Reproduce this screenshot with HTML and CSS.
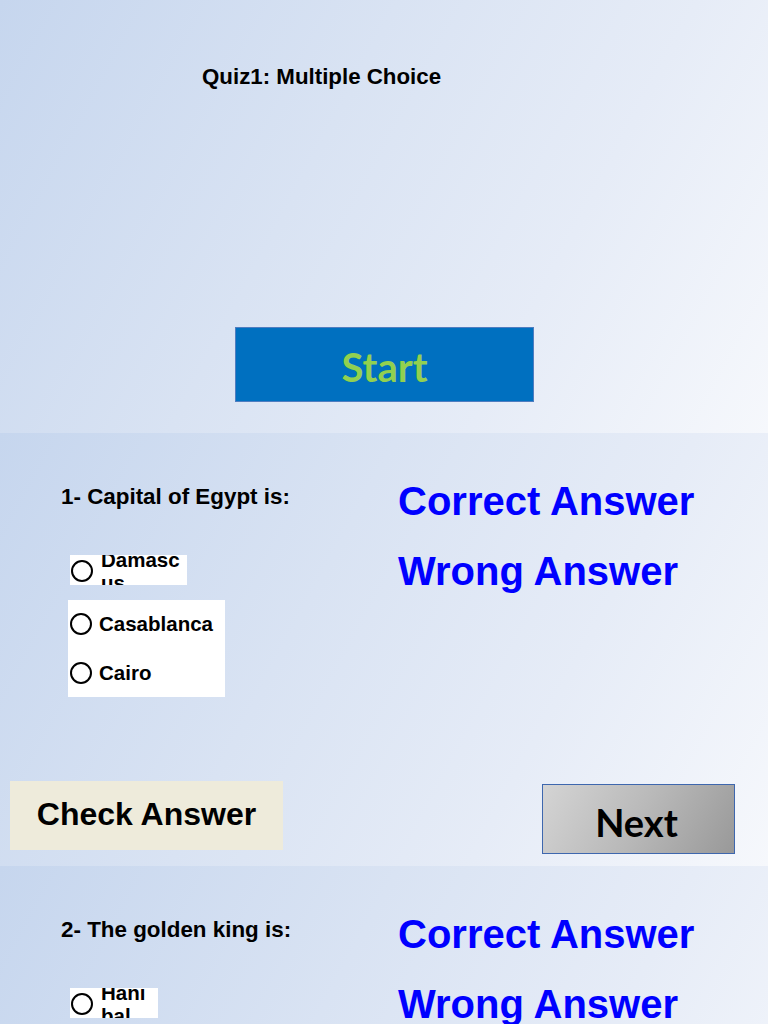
FILE: index.html
```html
<!DOCTYPE html>
<html lang="en">
<head>
<meta charset="utf-8">
<title>Quiz1: Multiple Choice</title>
<link rel="stylesheet" href="styles.css">
</head>
<body>
<section class="slide slide-title">
  <h1 class="quiz-title">Quiz1: Multiple Choice</h1>
  <button class="start-btn" type="button">Start</button>
</section>

<section class="slide slide-question">
  <div class="content">
    <div class="left">
      <p class="question">1- Capital of Egypt is:</p>
      <div class="opt-box opt-single opt-damascus">
        <span class="radio"></span>
        <span class="opt-text wrap">Damascus</span>
      </div>
      <div class="opt-box opt-group">
        <div class="opt-row"><span class="radio"></span><span class="opt-text">Casablanca</span></div>
        <div class="opt-row"><span class="radio"></span><span class="opt-text">Cairo</span></div>
      </div>
    </div>
    <div class="right">
      <p class="feedback">Correct Answer</p>
      <p class="feedback">Wrong Answer</p>
    </div>
  </div>
  <div class="actions">
    <button class="check-btn" type="button">Check Answer</button>
    <button class="next-btn" type="button">Next</button>
  </div>
</section>

<section class="slide slide-question">
  <div class="content">
    <div class="left">
      <p class="question">2- The golden king is:</p>
      <div class="opt-box opt-single opt-hanibal">
        <span class="radio"></span>
        <span class="opt-text wrap">Hanibal</span>
      </div>
    </div>
    <div class="right">
      <p class="feedback">Correct Answer</p>
      <p class="feedback">Wrong Answer</p>
    </div>
  </div>
</section>
</body>
</html>
```

FILE: styles.css
```css
html, body {
  margin: 0;
  padding: 0;
}

body {
  font-family: "Liberation Sans", Arial, sans-serif;
  color: #000;
  background: #f4f6fb;
}

.slide {
  width: 768px;
  height: 433px;
  box-sizing: border-box;
  background: linear-gradient(118deg, #c6d6ee 0%, #d9e3f3 40%, #e6ecf7 70%, #f6f8fc 100%);
  overflow: hidden;
}

/* ---------- slide 1 ---------- */
.slide-title {
  display: flex;
  flex-direction: column;
  align-items: flex-start;
  padding-top: 64px;
}

.quiz-title {
  margin: 0 0 0 202px;
  font-size: 22.3px;
  line-height: 26px;
  font-weight: bold;
}

.start-btn {
  margin: 237px 0 0 235px;
  width: 299px;
  height: 75px;
  box-sizing: border-box;
  border: 1px solid #4f7dc0;
  background: #0070c0;
  color: #92d050;
  font-family: Lato, "Open Sans", sans-serif;
  font-weight: bold;
  font-size: 40px;
  padding: 4px 0 0;
  display: flex;
  align-items: center;
  justify-content: center;
  cursor: pointer;
}

/* ---------- question slides ---------- */
.slide-question {
  display: flex;
  flex-direction: column;
}

.content {
  display: flex;
  height: 348px;
}

.left {
  width: 337px;
  padding-left: 61px;
  padding-top: 51px;
  box-sizing: content-box;
  display: flex;
  flex-direction: column;
  align-items: flex-start;
}

.question {
  margin: 0;
  font-size: 22.4px;
  line-height: 26px;
  font-weight: bold;
  white-space: nowrap;
}

.opt-box {
  background: #fff;
  font-weight: bold;
  font-size: 20.5px;
}

.opt-single {
  margin-top: 45px;
  margin-left: 9px;
  height: 30px;
  display: flex;
  align-items: center;
  overflow: hidden;
}

.opt-damascus {
  width: 117px;
}

.opt-hanibal {
  width: 88px;
}

.opt-single .radio {
  margin-left: 1px;
  margin-top: 1px;
}

.opt-single .opt-text {
  margin-left: 8px;
  align-self: flex-start;
  margin-top: -7px;
  line-height: 23px;
}

.opt-damascus .wrap {
  width: 84px;
  word-break: break-all;
}

.opt-hanibal .wrap {
  width: 52px;
  word-break: break-all;
}

.opt-group {
  margin-top: 15px;
  margin-left: 7px;
  width: 157px;
  height: 97px;
  box-sizing: border-box;
  padding-top: 13px;
  display: flex;
  flex-direction: column;
  gap: 27px;
}

.opt-row {
  display: flex;
  align-items: center;
  height: 22px;
}

.opt-row .radio {
  margin-left: 2px;
}

.opt-row .opt-text {
  margin-left: 7px;
  line-height: 22px;
}

.radio {
  flex: none;
  width: 22px;
  height: 22px;
  box-sizing: border-box;
  border: 2px solid #000;
  border-radius: 50%;
  background: #fff;
}

.right {
  padding-top: 45px;
  display: flex;
  flex-direction: column;
  gap: 24px;
}

.feedback {
  margin: 0;
  color: #0000ff;
  font-size: 40px;
  line-height: 46px;
  font-weight: bold;
  white-space: nowrap;
}

.actions {
  display: flex;
  align-items: flex-start;
  justify-content: space-between;
  padding: 0 33px 0 10px;
}

.check-btn {
  width: 273px;
  height: 69px;
  border: none;
  background: #eeebdb;
  font-family: "Liberation Sans", Arial, sans-serif;
  font-weight: bold;
  font-size: 32px;
  color: #000;
  padding: 0 0 2px;
  cursor: pointer;
}

.next-btn {
  margin-top: 3px;
  width: 193px;
  height: 70px;
  box-sizing: border-box;
  border: 1px solid #3e67ae;
  background: linear-gradient(120deg, #d4d4d4 0%, #b9b9b9 50%, #999 100%);
  font-family: Lato, "Open Sans", sans-serif;
  font-weight: bold;
  font-size: 38px;
  color: #000;
  padding: 6px 4px 0 0;
  cursor: pointer;
}
```
